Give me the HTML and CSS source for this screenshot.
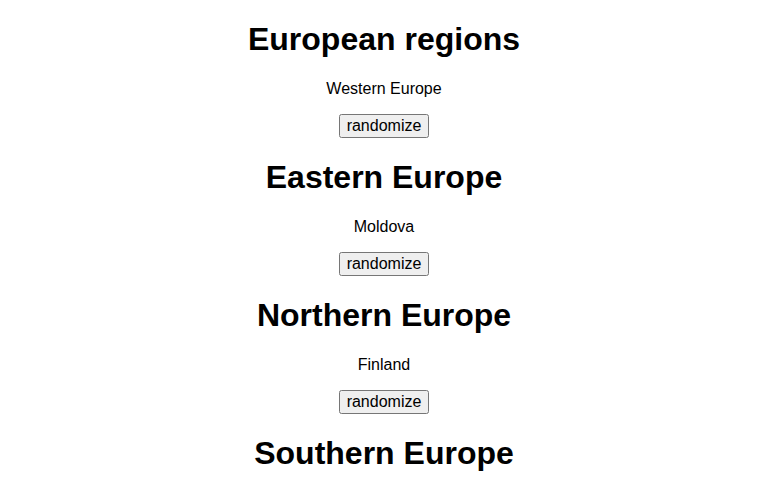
FILE: index.html
```html
<!DOCTYPE html>
<html lang="en">
<head>
    <meta charset="UTF-8">
    <meta name="viewport" content="width=device-width, initial-scale=1.0">
    <title>European regions</title>
    <link rel="stylesheet" href="styles.css">
</head>
<body>
    <div class="region">
        <h1>European regions</h1>
        <p class="pick">Western Europe</p>
        <button class="randomize">randomize</button>
    </div>
    <div class="region">
        <h1>Eastern Europe</h1>
        <p class="pick">Moldova</p>
        <button class="randomize">randomize</button>
    </div>
    <div class="region">
        <h1>Northern Europe</h1>
        <p class="pick">Finland</p>
        <button class="randomize">randomize</button>
    </div>
    <div class="region">
        <h1>Southern Europe</h1>
        <p class="pick">Italy</p>
        <button class="randomize">randomize</button>
    </div>
</body>
</html>
```

FILE: styles.css
```css
body {
    font-family: "Liberation Sans", Arial, sans-serif;
    color: #000;
    background-color: #fff;
    text-align: center;
}
.region:first-child h1 {
    margin-top: 13.44px;
}
.randomize {
    font-family: "Liberation Sans", Arial, sans-serif;
    font-size: 16px;
}
```
